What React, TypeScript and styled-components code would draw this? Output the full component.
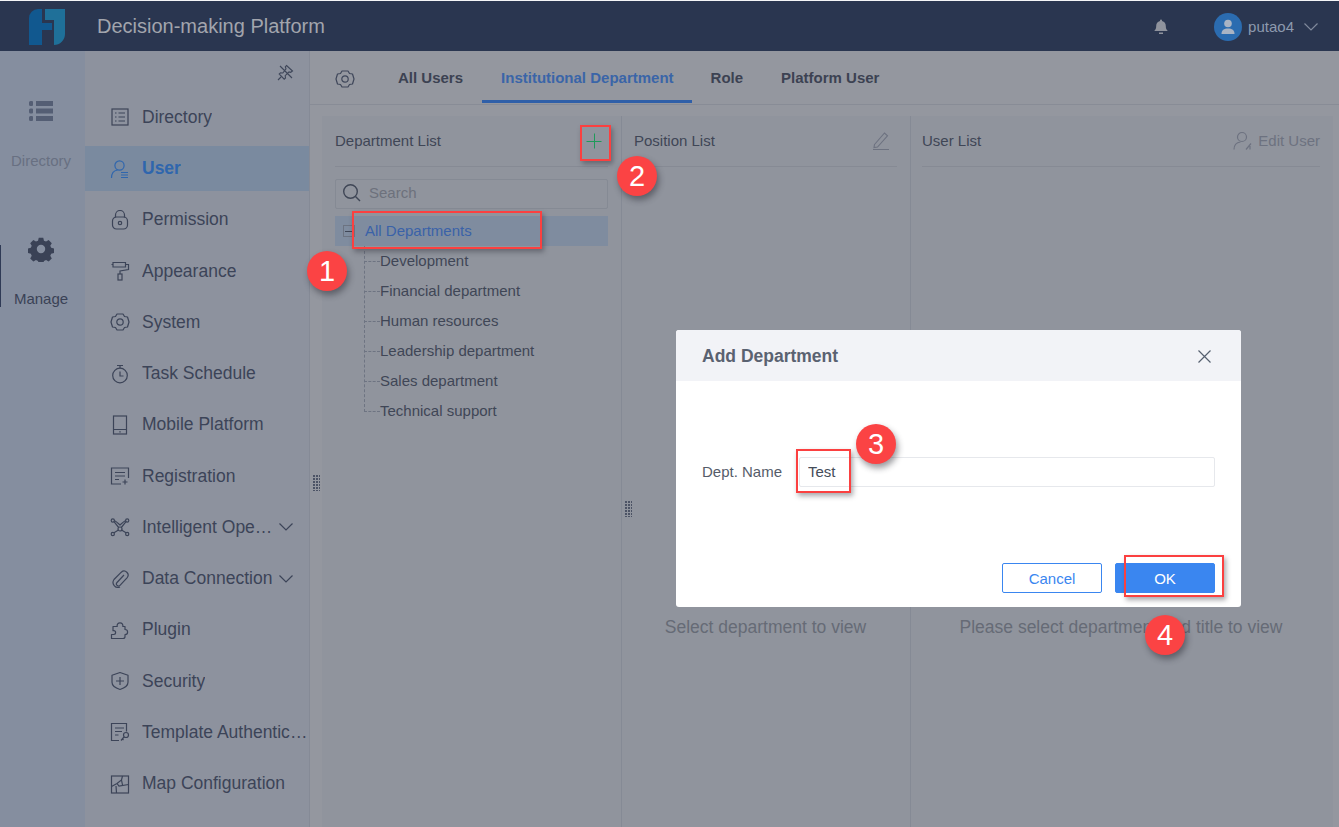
import React from 'react';
import styled, { createGlobalStyle } from 'styled-components';

const GlobalStyle = createGlobalStyle`
  html, body {
    margin: 0;
    padding: 0;
    height: 100%;
    overflow: hidden;
    background: #94979f;
    font-family: "Liberation Sans", Arial, sans-serif;
  }
  * {
    box-sizing: border-box;
  }
`;

const INK = '#3c4458';

const Svg = ({ children, size = 20 }: { children: React.ReactNode; size?: number }) => (
  <svg width={size} height={size} viewBox="0 0 20 20" fill="none" stroke="currentColor" strokeWidth="1.2">
    {children}
  </svg>
);

const menu = [
  {
    label: 'Directory',
    icon: (
      <Svg>
        <rect x="2" y="2" width="16" height="16" />
        <path d="M5 6h1.5M5 10h1.5M5 14h1.5M8.5 6H15M8.5 10H15M8.5 14H15" />
      </Svg>
    ),
  },
  {
    label: 'User',
    active: true,
    icon: (
      <Svg>
        <circle cx="9.5" cy="6.5" r="4.6" />
        <path d="M1.5 19c0-4.5 2.5-7.5 6-8M11 13.5h7M11 16h7M11 18.5h7" />
      </Svg>
    ),
  },
  {
    label: 'Permission',
    icon: (
      <Svg>
        <rect x="2.5" y="7" width="15" height="12" rx="4" />
        <path d="M5.5 7.5V5a4.5 4.5 0 0 1 9 0v2.5" />
        <circle cx="10" cy="13" r="1.7" />
      </Svg>
    ),
  },
  {
    label: 'Appearance',
    icon: (
      <Svg>
        <path d="M3 1.5h12.5V6H3zM1.5 3.5H3M15.5 3.5h3v5L10 10v3" />
        <rect x="8" y="13" width="4" height="6" />
      </Svg>
    ),
  },
  {
    label: 'System',
    icon: (
      <Svg>
        <path d="M7 2h6l1.5 2.5 3 .5 1.5 5-1.5 5-3 .5L13 18H7l-1.5-2.5-3-.5L1 10l1.5-5 3-.5z" strokeLinejoin="round" />
        <circle cx="10" cy="10" r="3.2" />
      </Svg>
    ),
  },
  {
    label: 'Task Schedule',
    icon: (
      <Svg>
        <circle cx="10" cy="11.5" r="7.3" />
        <path d="M7 1.5h6M10 1.5v2.7M10 7.5V12h3.5" />
      </Svg>
    ),
  },
  {
    label: 'Mobile Platform',
    icon: (
      <Svg>
        <rect x="3.5" y="1" width="13" height="18" />
        <path d="M3.5 14.5h13M9.3 16.8h1.4" />
      </Svg>
    ),
  },
  {
    label: 'Registration',
    icon: (
      <Svg>
        <path d="M11 18H1.5V2h17v10M5 6.5h10M5 10h10M5 13.5h4M15 13.5v5M12.5 16h5" />
      </Svg>
    ),
  },
  {
    label: 'Intelligent Operation',
    arrow: true,
    icon: (
      <Svg>
        <circle cx="10" cy="12" r="2" />
        <circle cx="2.8" cy="3.5" r="1.6" />
        <circle cx="17.2" cy="3.5" r="1.6" />
        <circle cx="2.8" cy="17" r="1.6" />
        <circle cx="17.2" cy="17" r="1.6" />
        <path d="M4 4.7l4.7 5.8M16 4.7l-4.700 5.800M4 15.800l4.500-2.800M16 15.800l-4.500-2.800M4.300 3.500c2 1 3.500 2.500 5.700 4.500 2.200-2 3.700-3.500 5.700-4.500" />
      </Svg>
    ),
  },
  {
    label: 'Data Connection',
    arrow: true,
    icon: (
      <Svg>
        <path d="M14 6l-7 7.5a2 2 0 0 0 3 2.8l7-7.500a4 4 0 0 0-5.700-5.600L4 10.500a5 5 0 0 0 6 7.500" />
      </Svg>
    ),
  },
  {
    label: 'Plugin',
    icon: (
      <Svg>
        <path d="M1.500 18.500v-4h2.200a1.900 1.900 0 0 0 0-3.800H3V6.500h4.200a2.900 2.900 0 1 1 5.600 0H15v3a2.600 2.600 0 1 1 0 5.200v1.800a2 2 0 0 1-2 2z" strokeLinejoin="round" />
      </Svg>
    ),
  },
  {
    label: 'Security',
    icon: (
      <Svg>
        <path d="M10 1.500l8 2.800v7c0 3.200-4 6-8 7.200-4-1.200-8-4-8-7.200v-7z" strokeLinejoin="round" />
        <path d="M10 6v8M6 10h8" />
      </Svg>
    ),
  },
  {
    label: 'Template Authentication',
    icon: (
      <Svg>
        <path d="M9 18.500H1.500v-17h15v8M5 6h9M5 9.500h7M5 13h3.500" />
        <circle cx="16" cy="13" r="2.500" />
        <path d="M14 15l-3 3.500M12 16.500l1.500 1.500" />
      </Svg>
    ),
  },
  {
    label: 'Map Configuration',
    icon: (
      <Svg>
        <rect x="1.500" y="2" width="17" height="17" />
        <path d="M12.500 2l-1 4-4.500 3.500-5.500 3M7 9.500l2 2.500 9.500-1.500M6 12l.5 7M11.500 6l1 5" />
      </Svg>
    ),
  },
];

const departments = [
  'Development',
  'Financial department',
  'Human resources',
  'Leadership department',
  'Sales department',
  'Technical support',
];

const Page = styled.div`
  position: relative;
  width: 1339px;
  height: 827px;
  display: flex;
  flex-direction: column;
  overflow: hidden;
  background: #94979f;
`;

const TopBar = styled.header`
  height: 51px;
  flex: none;
  display: flex;
  align-items: center;
  padding: 1px 20px 0 29px;
  background: #2a3650;
  border-top: 1px solid #f4f5f7;
`;

const Logo = styled.svg`
  width: 36px;
  height: 36px;
  flex: none;
`;

const Title = styled.div`
  margin-left: 32px;
  flex: 1;
  font-size: 20px;
  color: #a2a5ad;
`;

const BellIcon = styled.svg`
  width: 16px;
  height: 16px;
  color: #8f939d;
  margin-right: 45px;
`;

const Avatar = styled.div`
  width: 28px;
  height: 28px;
  border-radius: 50%;
  background: #2b6cb0;
  color: #a9b4c4;
  display: flex;
  align-items: center;
  justify-content: center;
`;

const UserName = styled.span`
  margin-left: 6px;
  font-size: 15px;
  color: #8d9aae;
`;

const UserChevron = styled.svg`
  width: 16px;
  height: 10px;
  margin-left: 9px;
  color: #808a9c;
`;

const Body = styled.div`
  flex: 1;
  display: flex;
  min-height: 0;
`;

const Rail = styled.nav`
  width: 85px;
  flex: none;
  display: flex;
  flex-direction: column;
  gap: 65px;
  padding: 47px 3px 0 0;
  background: #858e9f;
`;

const RailItem = styled.div<{ $active?: boolean }>`
  position: relative;
  height: 73px;
  display: flex;
  flex-direction: column;
  align-items: center;
  justify-content: space-between;
  color: ${(p) => (p.$active ? '#3a4256' : '#687082')};

  &::before {
    content: '';
    display: ${(p) => (p.$active ? 'block' : 'none')};
    position: absolute;
    left: 0;
    top: 9px;
    bottom: 2px;
    width: 1px;
    background: #2f3a55;
  }
`;

const RailIcon = styled.svg<{ $active?: boolean }>`
  width: 26px;
  height: 26px;
  color: ${(p) => (p.$active ? '#3a4256' : '#545e74')};
`;

const RailLabel = styled.span`
  font-size: 15px;
  line-height: 20px;
`;

const Sidebar = styled.aside`
  position: relative;
  width: 225px;
  flex: none;
  display: flex;
  flex-direction: column;
  gap: 6.25px;
  padding-top: 43.8px;
  background: #8d929e;
  border-right: 1px solid #858a96;
`;

const PinButton = styled.svg`
  position: absolute;
  top: 12px;
  right: 14px;
  width: 18px;
  height: 18px;
  color: #3f475a;
`;

const MenuRow = styled.div<{ $active?: boolean }>`
  height: 45px;
  flex: none;
  display: flex;
  align-items: center;
  padding-left: 25px;
  background: ${(p) => (p.$active ? '#7a8a9f' : 'transparent')};
  color: ${(p) => (p.$active ? '#2f66ad' : INK)};
  font-size: 17.5px;
  font-weight: ${(p) => (p.$active ? 700 : 400)};

  svg {
    flex: none;
  }
`;

const MenuLabel = styled.span<{ $short?: boolean }>`
  margin-left: 12px;
  width: ${(p) => (p.$short ? '134px' : 'auto')};
  max-width: ${(p) => (p.$short ? '134px' : '167px')};
  white-space: nowrap;
  overflow: hidden;
  text-overflow: ellipsis;
`;

const MenuArrow = styled.svg`
  width: 16px;
  height: 10px;
  margin-left: 2px;
  flex: none;
`;

const Main = styled.main`
  flex: 1;
  display: flex;
  flex-direction: column;
  min-width: 0;
`;

const TabBar = styled.div`
  height: 54px;
  flex: none;
  display: flex;
  align-items: stretch;
  padding-left: 25px;
  border-bottom: 1px solid #888c96;
`;

const TabGear = styled.div`
  width: 20px;
  margin-right: 24px;
  display: flex;
  align-items: center;
  padding-top: 2px;
  color: #3f475a;
`;

const Tab = styled.div<{ $active?: boolean }>`
  display: flex;
  align-items: center;
  padding: 3px ${(p) => (p.$active ? 18 : 19)}px 0 19px;
  height: 52px;
  font-size: 15px;
  font-weight: 700;
  color: ${(p) => (p.$active ? '#3a65a8' : '#3c4252')};
  border-bottom: 3px solid ${(p) => (p.$active ? '#2f5fa8' : 'transparent')};
`;

const Panels = styled.div`
  flex: 1;
  display: flex;
  margin: 11px 6px 0 12px;
  min-height: 0;
`;

const Panel = styled.section<{ $width: number; $inset: number; $last?: boolean }>`
  position: relative;
  width: ${(p) => p.$width}px;
  flex: ${(p) => (p.$last ? '1' : 'none')};
  display: flex;
  flex-direction: column;
  padding: 0 13px 0 ${(p) => p.$inset}px;
  background: #90949d;
  border-right: ${(p) => (p.$last ? 'none' : '1px solid #858a95')};
`;

const PanelHead = styled.div`
  height: 51px;
  flex: none;
  display: flex;
  align-items: center;
  justify-content: space-between;
  border-bottom: 1px solid #868a94;
  font-size: 15px;
  color: #3f4656;
`;

const PanelTitle = styled.span`
  margin-bottom: 2px;
`;

const HeadAction = styled.span<{ $gap?: number }>`
  display: flex;
  align-items: center;
  gap: 5px;
  margin-right: ${(p) => p.$gap || 0}px;
  color: #6d7280;
`;

const GreenPlus = styled.svg`
  width: 20px;
  height: 20px;
  margin-right: 4px;
  color: #1f9a5a;
`;

const SearchBox = styled.div`
  height: 30px;
  margin-top: 12px;
  display: flex;
  align-items: center;
  padding: 0 0 3px 6px;
  gap: 8px;
  border: 1px solid #858a94;
  border-radius: 2px;
  font-size: 15px;
  color: #6d717c;
`;

const SearchGlass = styled.svg`
  width: 19px;
  height: 19px;
  color: #3f4656;
`;

const Tree = styled.div`
  margin-top: 7px;
`;

const RootRow = styled.div`
  height: 30px;
  display: flex;
  align-items: center;
  padding: 0 0 2px 8px;
  background: #7f8c9f;
  font-size: 15px;
  color: #3a62a8;
`;

const Expander = styled.span`
  position: relative;
  width: 12px;
  height: 12px;
  margin: 2px 10px 0 0;
  border: 1px solid #6c7381;

  &::after {
    content: '';
    position: absolute;
    left: 1px;
    right: 1px;
    top: 4.5px;
    height: 1px;
    background: #3f4656;
  }
`;

const Children = styled.div`
  position: relative;
  margin-left: 29px;
  padding-left: 16px;

  &::before {
    content: '';
    position: absolute;
    left: 0;
    top: 0;
    bottom: 14px;
    border-left: 1px dashed #6e7482;
  }
`;

const ChildRow = styled.div`
  position: relative;
  height: 30px;
  display: flex;
  align-items: center;
  padding-bottom: 2px;
  font-size: 15px;
  color: #3f4656;

  &::before {
    content: '';
    position: absolute;
    left: -16px;
    width: 16px;
    top: 15px;
    border-top: 1px dashed #6e7482;
  }
`;

const EmptyHint = styled.div`
  padding-top: 450px;
  text-align: center;
  font-size: 17.5px;
  white-space: nowrap;
  color: #666b76;
`;

const Dragger = styled.div<{ $left: number; $top: number }>`
  position: absolute;
  left: ${(p) => p.$left}px;
  top: ${(p) => p.$top}px;
  width: 7px;
  height: 16px;
  background-image: radial-gradient(circle at 1px 1px, #4c5365 1px, transparent 1px);
  background-size: 3px 3px;
`;

const Modal = styled.div`
  position: absolute;
  left: 676px;
  top: 330px;
  width: 565px;
  height: 277px;
  display: flex;
  flex-direction: column;
  background: #ffffff;
  border-radius: 3px;
`;

const ModalHead = styled.div`
  height: 51px;
  flex: none;
  display: flex;
  align-items: center;
  justify-content: space-between;
  padding: 1px 29px 0 26px;
  background: #f2f3f7;
  border-radius: 3px 3px 0 0;
  font-size: 17.5px;
  font-weight: 700;
  color: #5a6271;
`;

const CloseIcon = styled.svg`
  width: 15px;
  height: 15px;
  color: #566070;
`;

const ModalBody = styled.div`
  flex: 1;
  display: flex;
  align-items: flex-start;
  padding: 76px 26px 0;
`;

const FieldLabel = styled.label`
  width: 97px;
  flex: none;
  line-height: 30px;
  font-size: 15px;
  color: #555c69;
`;

const TextField = styled.input`
  flex: 1;
  min-width: 0;
  height: 30px;
  padding: 0 8px 2px;
  border: 1px solid #e6e8ec;
  border-radius: 2px;
  outline: none;
  font-family: inherit;
  font-size: 15px;
  color: #454c59;
`;

const ModalFoot = styled.div`
  display: flex;
  justify-content: flex-end;
  gap: 13px;
  padding: 0 26px 14px;
`;

const Button = styled.button<{ $primary?: boolean }>`
  width: 100px;
  height: 30px;
  border-radius: 2px;
  border: 1px solid #3a86f0;
  background: ${(p) => (p.$primary ? '#3a86f0' : '#ffffff')};
  color: ${(p) => (p.$primary ? '#ffffff' : '#3a86f0')};
  font-family: inherit;
  font-size: 15px;
`;

const Mark = styled.div<{ $x: number; $y: number; $w: number; $h: number }>`
  position: absolute;
  left: ${(p) => p.$x}px;
  top: ${(p) => p.$y}px;
  width: ${(p) => p.$w}px;
  height: ${(p) => p.$h}px;
  border: 2px solid #fb4040;
  box-shadow: 2px 3px 5px rgba(40, 40, 50, 0.4);
`;

const Badge = styled.div<{ $x: number; $y: number }>`
  position: absolute;
  left: ${(p) => p.$x - 20}px;
  top: ${(p) => p.$y - 20}px;
  width: 40px;
  height: 40px;
  display: flex;
  align-items: center;
  justify-content: center;
  border-radius: 50%;
  background: #fb4344;
  box-shadow: 2px 4px 6px rgba(30, 30, 40, 0.45);
  color: #ffffff;
  font-size: 29px;
`;

const Chevron = () => (
  <path d="M1.5 1.5L8 8l6.5-6.5" fill="none" stroke="currentColor" strokeWidth="1.2" />
);

export default function App() {
  return (
    <Page>
      <GlobalStyle />
      <TopBar>
        <Logo viewBox="0 0 36 36">
          <path d="M0 36V9a9 9 0 0 1 9-9h4v14h10v7H13v15z" fill="#11588f" />
          <path d="M16 0h20v25a11 11 0 0 1-11 11V11h-9z" fill="#1f7099" />
        </Logo>
        <Title>Decision-making Platform</Title>
        <BellIcon viewBox="0 0 16 16">
          <path d="M8 .5a1 1 0 0 1 1 1v.4c2.5.6 3.8 2.6 3.8 5.1 0 2.5.7 3.6 2 5H1.200c1.300-1.400 2-2.500 2-5 0-2.500 1.300-4.500 3.800-5.100v-.4a1 1 0 0 1 1-1zM6 13.500h4V15H6z" fill="currentColor" />
        </BellIcon>
        <Avatar>
          <svg width="16" height="16" viewBox="0 0 16 16">
            <circle cx="8" cy="4.5" r="3.8" fill="currentColor" />
            <path d="M1.5 15c0-4 2.5-5.500 6.500-5.500s6.500 1.500 6.500 5.500z" fill="currentColor" />
          </svg>
        </Avatar>
        <UserName>putao4</UserName>
        <UserChevron viewBox="0 0 16 10">
          <Chevron />
        </UserChevron>
      </TopBar>
      <Body>
        <Rail>
          <RailItem>
            <RailIcon viewBox="0 0 26 26">
              <path transform="translate(0 1)" d="M1 3.500A1.500 1.500 0 0 1 2.500 2H4a1 1 0 0 1 1 1v3a1 1 0 0 1-1 1H2.500A1.500 1.500 0 0 1 1 5.500zM8 2h17v5H8zM1 11a1.500 1.500 0 0 1 1.500-1.500H4a1 1 0 0 1 1 1v3a1 1 0 0 1-1 1H2.500A1.500 1.500 0 0 1 1 13zM8 9.500h17v5H8zM1 18.500A1.500 1.500 0 0 1 2.500 17H4a1 1 0 0 1 1 1v3a1 1 0 0 1-1 1H2.500A1.500 1.500 0 0 1 1 20.500zM8 17h17v5H8z" fill="currentColor" />
            </RailIcon>
            <RailLabel>Directory</RailLabel>
          </RailItem>
          <RailItem $active>
            <RailIcon $active viewBox="0 0 26 26">
              <path
                fillRule="evenodd"
                fill="currentColor"
                d="M10.500.5h5l.8 3.200 2.300 1 2.900-1.700 3.500 3.500-1.700 2.900 1 2.300 3.200.8v5l-3.200.8-1 2.300 1.700 2.900-3.500 3.500-2.900-1.700-2.300 1-.8 3.200h-5l-.8-3.200-2.300-1-2.900 1.700-3.500-3.500 1.700-2.900-1-2.300-3.200-.8v-5l3.200-.8 1-2.300-1.700-2.900 3.500-3.500 2.900 1.700 2.300-1zM13 8.300a4.700 4.700 0 1 0 0 9.400 4.700 4.700 0 0 0 0-9.400z"
                transform="translate(1.3 1.3) scale(0.9)"
              />
            </RailIcon>
            <RailLabel>Manage</RailLabel>
          </RailItem>
        </Rail>
        <Sidebar>
          <PinButton viewBox="0 0 18 18" fill="none" stroke="currentColor" strokeWidth="1.1">
            <path d="M9.500 2.500l6 5.500-1.800 1.300-1.700-.4-3.800 3.800.3 2.300-1.300 1.200-5-5.200 1.300-1.200 2.300.2L9 5.800l-.7-2zM4 14l-3 3M3 3l12 12" />
          </PinButton>
          {menu.map((item) => (
            <MenuRow key={item.label} $active={item.active}>
              {item.icon}
              <MenuLabel $short={item.arrow}>{item.label}</MenuLabel>
              {item.arrow && (
                <MenuArrow viewBox="0 0 16 10">
                  <Chevron />
                </MenuArrow>
              )}
            </MenuRow>
          ))}
        </Sidebar>
        <Main>
          <TabBar>
            <TabGear>
              <Svg>
                <path d="M7 2h6l1.500 2.500 3 .5 1.500 5-1.500 5-3 .5L13 18H7l-1.500-2.500-3-.5L1 10l1.500-5 3-.5z" strokeLinejoin="round" />
                <circle cx="10" cy="10" r="3.2" />
              </Svg>
            </TabGear>
            <Tab>All Users</Tab>
            <Tab $active>Institutional Department</Tab>
            <Tab>Role</Tab>
            <Tab>Platform User</Tab>
          </TabBar>
          <Panels>
            <Panel $width={300} $inset={13}>
              <PanelHead>
                <PanelTitle>Department List</PanelTitle>
                <GreenPlus viewBox="0 0 20 20" fill="none" stroke="currentColor" strokeWidth="1">
                  <path d="M10.500 2.500v15M2.500 10.500h15" />
                </GreenPlus>
              </PanelHead>
              <SearchBox>
                <SearchGlass viewBox="0 0 19 19" fill="none" stroke="currentColor" strokeWidth="1.4">
                  <circle cx="8.5" cy="8.5" r="6.8" />
                  <path d="M13.500 13.500l4.500 4.500" />
                </SearchGlass>
                Search
              </SearchBox>
              <Tree>
                <RootRow>
                  <Expander />
                  All Departments
                </RootRow>
                <Children>
                  {departments.map((name) => (
                    <ChildRow key={name}>{name}</ChildRow>
                  ))}
                </Children>
              </Tree>
            </Panel>
            <Panel $width={289} $inset={12}>
              <PanelHead>
                <PanelTitle>Position List</PanelTitle>
                <HeadAction $gap={6}>
                  <svg width="20" height="20" viewBox="0 0 20 20" fill="none" stroke="currentColor" strokeWidth="1.1">
                    <path d="M3.500 13.500L13.500 2l3 2.800L6.500 16l-3.500.5zM2 18.500h16" />
                  </svg>
                </HeadAction>
              </PanelHead>
              <EmptyHint>Select department to view</EmptyHint>
            </Panel>
            <Panel $width={422} $inset={11} $last>
              <PanelHead>
                <PanelTitle>User List</PanelTitle>
                <HeadAction>
                  <svg width="20" height="20" viewBox="0 0 20 20" fill="none" stroke="currentColor" strokeWidth="1.2">
                    <circle cx="9" cy="6" r="4.500" />
                    <path d="M1 18.500c0-4.500 2.500-7 6.500-7.500M13 18.500l5-6M17 15v3.500" />
                  </svg>
                  <PanelTitle>Edit User</PanelTitle>
                </HeadAction>
              </PanelHead>
              <EmptyHint>Please select department and title to view</EmptyHint>
            </Panel>
          </Panels>
        </Main>
      </Body>

      <Dragger $left={313} $top={475} />
      <Dragger $left={625} $top={501} />

      <Modal>
        <ModalHead>
          Add Department
          <CloseIcon viewBox="0 0 15 15" fill="none" stroke="currentColor" strokeWidth="1.2">
            <path d="M1.500 1.500l12 12M13.500 1.500l-12 12" />
          </CloseIcon>
        </ModalHead>
        <ModalBody>
          <FieldLabel>Dept. Name</FieldLabel>
          <TextField defaultValue="Test" />
        </ModalBody>
        <ModalFoot>
          <Button>Cancel</Button>
          <Button $primary>OK</Button>
        </ModalFoot>
      </Modal>

      <Mark $x={352} $y={211} $w={190} $h={38} />
      <Mark $x={580} $y={125} $w={31} $h={36} />
      <Mark $x={796} $y={449} $w={55} $h={44} />
      <Mark $x={1124} $y={555} $w={100} $h={42} />
      <Badge $x={327} $y={271}>1</Badge>
      <Badge $x={637} $y={176}>2</Badge>
      <Badge $x={876} $y={444}>3</Badge>
      <Badge $x={1165} $y={635}>4</Badge>
    </Page>
  );
}
